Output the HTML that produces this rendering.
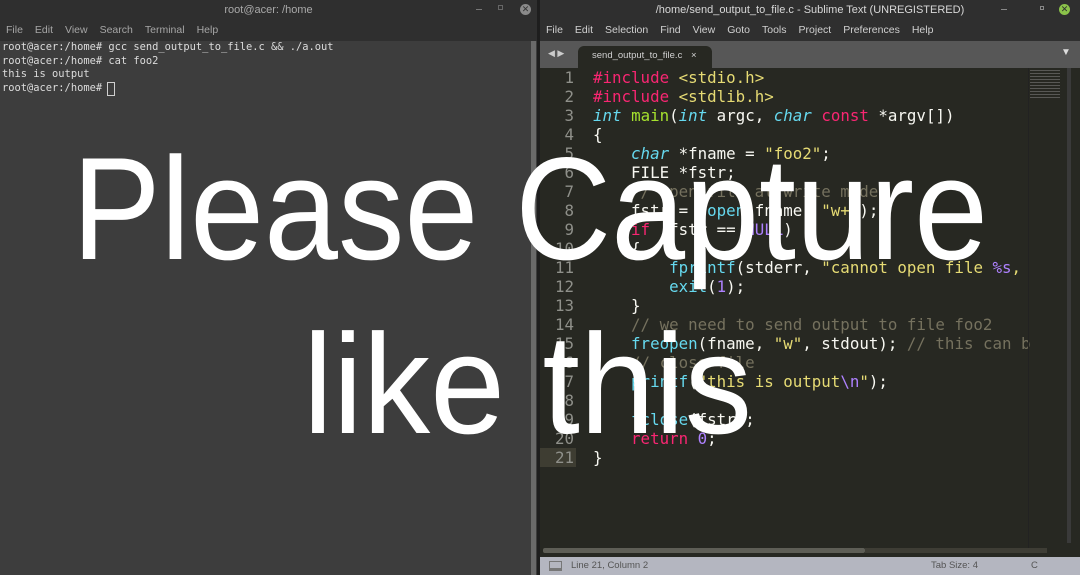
<!DOCTYPE html>
<html><head><meta charset="utf-8"><style>
*{margin:0;padding:0;box-sizing:border-box}
body{width:1080px;height:575px;overflow:hidden;background:#1e1e1e;position:relative;font-family:"Liberation Sans",sans-serif}
.abs{position:absolute}
.term{left:0;top:0;width:537px;height:575px;background:#3d3d3d}
.tt{left:0;top:0;width:537px;height:20px;background:#2f2f2f;color:#a9a9a9;font-size:11px;text-align:center;line-height:20px}
.tm{left:0;top:20px;width:537px;height:21px;background:#2f2f2f;color:#a6a6a6;font-size:10.5px;line-height:21px}
.tm span,.sm span{margin-left:6px;margin-right:6px}
.tc{left:2px;top:41px;font-family:"DejaVu Sans Mono","Liberation Mono",monospace;font-size:10.4px;line-height:13.6px;color:#dcdcdc;white-space:pre}
.sub{left:540px;top:0;width:540px;height:575px;background:#272822}
.st{left:0;top:0;width:540px;height:20px;background:#2f2f2f;color:#d8d8d8;font-size:11px;text-align:center;line-height:20px}
.sm{left:0;top:20px;width:540px;height:21px;background:#2f2f2f;color:#d0d0d0;font-size:10.5px;line-height:21px}
.tb{left:0;top:41px;width:540px;height:27px;background:#575757}
.tab{left:38px;top:46px;width:134px;height:22px;background:#272822;color:#d0d0d0;font-size:9.5px;line-height:20px;padding-left:14px;border-radius:6px 6px 0 0}
.code{font-family:"DejaVu Sans Mono",monospace;font-size:15.8px;line-height:19px;white-space:pre;color:#f8f8f2}
.gut{left:0;top:68px;width:34px;text-align:right;color:#8f908a}
.cd{left:53px;top:68px}
.k{color:#f92672}.t{color:#66d9ef;font-style:italic}.f{color:#66d9ef}.g{color:#a6e22e}.s{color:#e6db74}.n{color:#ae81ff}.c{color:#75715e}
.status{left:0;top:557px;width:540px;height:18px;background:#b4b6c0;color:#555;font-size:9.5px;line-height:18px}
</style></head><body>
<div class="abs term">
 <div class="abs tt">root@acer: /home</div>
 <div class="abs" style="left:476px;top:9px;width:6px;height:1px;background:#777"></div>
 <div class="abs" style="left:498px;top:5px;width:5px;height:5px;border:1px solid #666"></div>
 <div class="abs" style="left:520px;top:4px;width:11px;height:11px;border-radius:50%;background:#8a8a8a;color:#333;font-size:9px;line-height:11px;text-align:center">✕</div>
 <div class="abs tm"><span>File</span><span>Edit</span><span>View</span><span>Search</span><span>Terminal</span><span>Help</span></div>
 <div class="abs tc">root@acer:/home# gcc send_output_to_file.c &amp;&amp; ./a.out
root@acer:/home# cat foo2
this is output
root@acer:/home# </div>
 <div class="abs" style="left:107px;top:82px;width:8px;height:14px;border:1px solid #cfcfcf"></div>
 <div class="abs" style="left:531px;top:41px;width:5px;height:534px;background:#6a6a6a"></div>
</div>
<div class="abs sub">
 <div class="abs st">/home/send_output_to_file.c - Sublime Text (UNREGISTERED)</div>
 <div class="abs" style="left:461px;top:9px;width:6px;height:1px;background:#888"></div>
 <div class="abs" style="left:500px;top:6px;width:4px;height:4px;border:1px solid #888"></div>
 <div class="abs" style="left:519px;top:4px;width:11px;height:11px;border-radius:50%;background:#8bc34a;color:#2f2f2f;font-size:9px;line-height:11px;text-align:center">✕</div>
 <div class="abs sm"><span>File</span><span>Edit</span><span>Selection</span><span>Find</span><span>View</span><span>Goto</span><span>Tools</span><span>Project</span><span>Preferences</span><span>Help</span></div>
 <div class="abs tb"></div>
 <div class="abs" style="left:8px;top:48px;color:#ccc;font-size:9px">◀ ▶</div>
 <div class="abs" style="left:521px;top:47px;color:#ddd;font-size:10px">▼</div>
 <div class="abs tab">send_output_to_file.c <span style="margin-left:6px">×</span></div>
 <div class="abs" style="left:0;top:448px;width:36px;height:19px;background:#3e3d32"></div>
 <div class="abs code gut">1
2
3
4
5
6
7
8
9
10
11
12
13
14
15
16
17
18
19
20
21</div>
 <div class="abs code cd"><span class="k">#include</span> <span class="s">&lt;stdio.h&gt;</span>
<span class="k">#include</span> <span class="s">&lt;stdlib.h&gt;</span>
<span class="t">int</span> <span class="g">main</span>(<span class="t">int</span> argc, <span class="t">char</span> <span class="k">const</span> *argv[])
{
    <span class="t">char</span> *fname = <span class="s">"foo2"</span>;
    FILE *fstr;
    <span class="c">// open file at write mode</span>
    fstr = <span class="f">fopen</span>(fname, <span class="s">"w+"</span>);
    <span class="k">if</span> (fstr == <span class="n">NULL</span>)
    {
        <span class="f">fprintf</span>(stderr, <span class="s">"cannot open file <span class="n">%s</span>,</span>
        <span class="f">exit</span>(<span class="n">1</span>);
    }
    <span class="c">// we need to send output to file foo2</span>
    <span class="f">freopen</span>(fname, <span class="s">"w"</span>, stdout); <span class="c">// this can b</span>
    <span class="c">// close file</span>
    <span class="f">printf</span>(<span class="s">"this is output<span class="n">\n</span>"</span>);

    <span class="f">fclose</span>(fstr);
    <span class="k">return</span> <span class="n">0</span>;
}</div>
 <div class="abs" style="left:488px;top:68px;width:1px;height:480px;background:#222"></div>
 <div class="abs" style="left:490px;top:70px;width:30px;height:30px;opacity:.5;background:repeating-linear-gradient(#888 0 1px,transparent 1px 3px)"></div>
 <div class="abs" style="left:527px;top:68px;width:4px;height:475px;background:#3a3a3a"></div>
 <div class="abs" style="left:3px;top:548px;width:322px;height:5px;background:#5e5e56;border-radius:2px"></div>
 <div class="abs" style="left:325px;top:548px;width:182px;height:5px;background:#3e3d35"></div>
 <div class="abs status"><span style="position:absolute;left:9px;top:4px;width:13px;height:10px;border:1px solid #777;border-bottom-width:3px"></span><span style="position:absolute;left:31px">Line 21, Column 2</span><span style="position:absolute;left:391px">Tab Size: 4</span><span style="position:absolute;left:491px">C</span></div>
</div>
<svg class="abs" style="left:0;top:0" width="1080" height="575">
 <text x="72" y="259" textLength="916" lengthAdjust="spacingAndGlyphs" font-family="Liberation Sans" font-size="146" fill="#fff">Please Capture</text>
 <text x="303" y="433" textLength="449" lengthAdjust="spacingAndGlyphs" font-family="Liberation Sans" font-size="142" fill="#fff">like this</text>
</svg>
</body></html>
